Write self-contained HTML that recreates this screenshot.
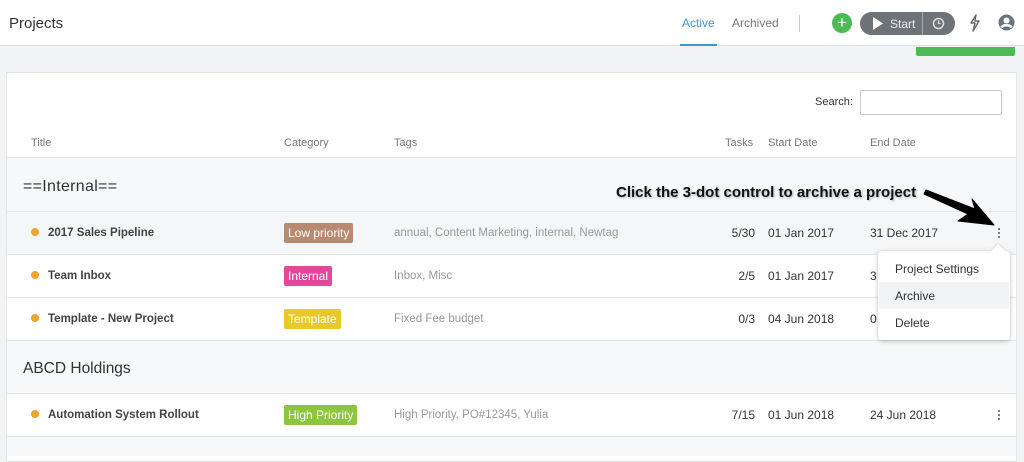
<!DOCTYPE html>
<html><head><meta charset="utf-8"><style>
*{box-sizing:border-box;margin:0;padding:0}
body{width:1024px;height:452px;overflow:hidden;background:#f2f3f5;font-family:"Liberation Sans",sans-serif;position:relative;color:#333}
.a{position:absolute}
.hdr{left:0;top:0;width:1024px;height:46px;background:#fff;border-bottom:1px solid #dcdfe3}
.card{left:6px;top:72px;width:1011px;height:390px;background:#fff;border:1px solid #e3e5e8}
.row{left:7px;width:1009px;border-top:1px solid #e4e6e9}
.t{font-size:12px;color:#333}
.b{font-size:11.5px;font-weight:bold;color:#444;margin-top:1px}
.g{font-size:11px;color:#777}
.dot{width:8px;height:8px;border-radius:50%;background:#f0a330}
.tag{font-size:12px;color:#fff;padding:3px 4px;border-radius:2px}
.tg{font-size:11.5px;color:#999;margin-top:1px}
.k{width:3px}
.k i{display:block;width:2px;height:2px;background:#555;border-radius:50%;margin-bottom:2px}
</style></head><body>
<div class="a hdr"></div>
<div class="a" style="left:9px;top:15px;font-size:15px;color:#333">Projects</div>
<div class="a" style="left:682px;top:16px;font-size:12px;color:#3a9ad9">Active</div>
<div class="a" style="left:680px;top:44px;width:37px;height:2px;background:#3a9ad9"></div>
<div class="a" style="left:732px;top:16px;font-size:12px;color:#777">Archived</div>
<div class="a" style="left:799px;top:15px;width:1px;height:17px;background:#ccc"></div>
<div class="a" style="left:832px;top:13px;width:20px;height:20px;border-radius:50%;background:#4cbb55;color:#fff;font-size:17px;line-height:19px;text-align:center">+</div>
<div class="a" style="left:860px;top:12px;width:95px;height:23px;border-radius:12px;background:#6e7378"></div>
<div class="a" style="left:922px;top:12px;width:1px;height:23px;background:#aaa"></div>
<svg class="a" style="left:872px;top:17px" width="12" height="13"><path d="M1 0L11 6.5L1 13Z" fill="#fff"/></svg>
<div class="a" style="left:890px;top:17px;font-size:12px;color:#eee">Start</div>
<svg class="a" style="left:932px;top:17px" width="13" height="13"><circle cx="6.5" cy="6.5" r="5" fill="none" stroke="#ddd" stroke-width="1.5"/><path d="M6.5 3.5V6.5H8.5" stroke="#ddd" fill="none" stroke-width="1.3"/></svg>
<svg class="a" style="left:969px;top:14px" width="12" height="18"><path d="M7 1L2 9H6L4 17L10 7H6Z" fill="none" stroke="#666" stroke-width="1.4" stroke-linejoin="round"/></svg>
<svg class="a" style="left:998px;top:14px" width="17" height="17"><circle cx="8.5" cy="8.5" r="8" fill="#6e7378"/><circle cx="8.5" cy="6.5" r="3" fill="#fff"/><path d="M3.5 13.5C5 10.5 12 10.5 13.5 13.5" stroke="#fff" stroke-width="2.4" fill="none"/></svg>
<div class="a" style="left:916px;top:47px;width:99px;height:9px;background:#4cbb55;border-radius:0 0 2px 2px"></div>
<div class="a card"></div>
<div class="a g" style="left:815px;top:96px;color:#333">Search:</div>
<div class="a" style="left:860px;top:90px;width:142px;height:25px;border:1px solid #c8cbce;border-radius:2px;background:#fff"></div>
<div class="a g" style="left:31px;top:137px">Title</div>
<div class="a g" style="left:284px;top:137px">Category</div>
<div class="a g" style="left:394px;top:137px">Tags</div>
<div class="a g" style="left:725px;top:137px">Tasks</div>
<div class="a g" style="left:768px;top:137px">Start Date</div>
<div class="a g" style="left:870px;top:137px">End Date</div>
<div class="a row" style="top:157px;height:54px;background:#f7f8f9"></div>
<div class="a" style="left:23px;top:178px;font-size:16px;color:#333;letter-spacing:.3px">==Internal==</div>
<div class="a row" style="top:211px;height:43px;background:#f5f6f7"></div>
<div class="a row" style="top:254px;height:43px"></div>
<div class="a row" style="top:297px;height:43px"></div>
<div class="a row" style="top:340px;height:53px;background:#f7f8f9"></div>
<div class="a" style="left:23px;top:360px;font-size:15.5px;color:#333">ABCD Holdings</div>
<div class="a row" style="top:393px;height:43px"></div>
<div class="a row" style="top:436px;height:20px;background:#f7f8f9"></div>

<div class="a dot" style="left:31px;top:228px"></div><div class="a b" style="left:48px;top:226px">2017 Sales Pipeline</div>
<div class="a tag" style="left:284px;top:223px;background:#b98a72">Low priority</div>
<div class="a tg" style="left:394px;top:226px">annual, Content Marketing, internal, Newtag</div>
<div class="a t" style="left:703px;top:226px;width:52px;text-align:right">5/30</div>
<div class="a t" style="left:768px;top:226px">01 Jan 2017</div>
<div class="a t" style="left:870px;top:226px">31 Dec 2017</div>
<div class="a k" style="left:998px;top:228px"><i></i><i></i><i></i></div>

<div class="a dot" style="left:31px;top:271px"></div><div class="a b" style="left:48px;top:269px">Team Inbox</div>
<div class="a tag" style="left:284px;top:266px;background:#e2479a">Internal</div>
<div class="a tg" style="left:394px;top:269px">Inbox, Misc</div>
<div class="a t" style="left:703px;top:269px;width:52px;text-align:right">2/5</div>
<div class="a t" style="left:768px;top:269px">01 Jan 2017</div>
<div class="a t" style="left:870px;top:269px">3</div>

<div class="a dot" style="left:31px;top:314px"></div><div class="a b" style="left:48px;top:312px">Template - New Project</div>
<div class="a tag" style="left:284px;top:309px;background:#e8c92a">Template</div>
<div class="a tg" style="left:394px;top:312px">Fixed Fee budget</div>
<div class="a t" style="left:703px;top:312px;width:52px;text-align:right">0/3</div>
<div class="a t" style="left:768px;top:312px">04 Jun 2018</div>
<div class="a t" style="left:870px;top:312px">0</div>

<div class="a dot" style="left:31px;top:410px"></div><div class="a b" style="left:48px;top:408px">Automation System Rollout</div>
<div class="a tag" style="left:284px;top:405px;background:#8cc63f">High Priority</div>
<div class="a tg" style="left:394px;top:408px">High Priority, PO#12345, Yulia</div>
<div class="a t" style="left:703px;top:408px;width:52px;text-align:right">7/15</div>
<div class="a t" style="left:768px;top:408px">01 Jun 2018</div>
<div class="a t" style="left:870px;top:408px">24 Jun 2018</div>
<div class="a k" style="left:998px;top:410px"><i></i><i></i><i></i></div>

<div class="a" style="left:878px;top:251px;width:132px;height:89px;background:#fff;border-radius:3px;box-shadow:0 1px 5px rgba(0,0,0,.25)"></div>
<div class="a" style="left:993px;top:246px;width:10px;height:10px;background:#fff;transform:rotate(45deg);box-shadow:-1px -1px 2px rgba(0,0,0,.1)"></div>
<div class="a" style="left:879px;top:282px;width:130px;height:27px;background:#f2f3f4"></div>
<div class="a t" style="left:895px;top:262px">Project Settings</div>
<div class="a t" style="left:895px;top:289px">Archive</div>
<div class="a t" style="left:895px;top:316px">Delete</div>

<div class="a" style="left:616px;top:184px;font-size:15px;font-weight:bold;color:#111;text-shadow:1px 1px 2px rgba(0,0,0,.3)">Click the 3-dot control to archive a project</div>
<svg class="a" style="left:920px;top:185px" width="80" height="45"><path d="M6 5L55 24L52 14L74 40L38 36L48 29L4 9Z" fill="#000" stroke="#000" stroke-width="1" stroke-linejoin="round"/></svg>
</body></html>
